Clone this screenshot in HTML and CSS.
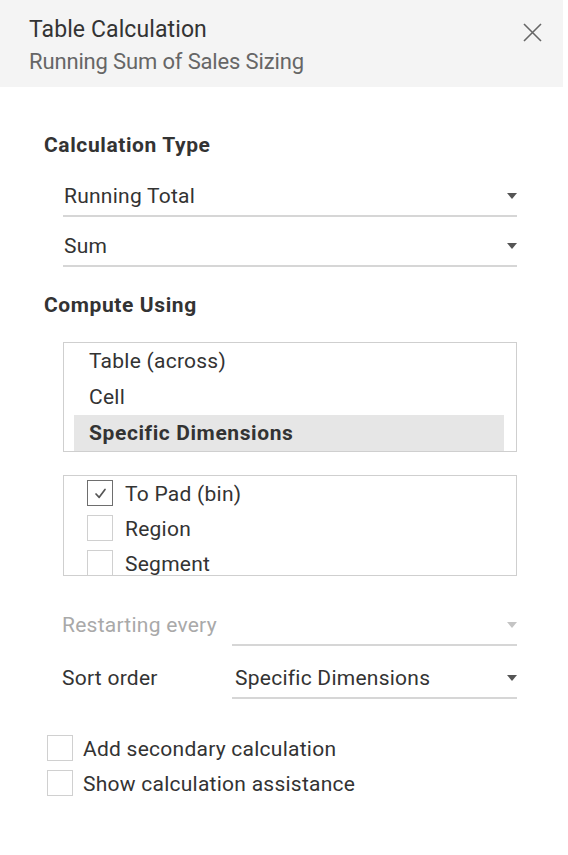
FILE: index.html
```html
<!DOCTYPE html>
<html lang="en">
<head>
<meta charset="utf-8">
<title>Table Calculation</title>
<link rel="stylesheet" href="styles.css">
</head>
<body>
<div class="panel">
  <header class="header">
    <div class="titles">
      <div class="title">Table Calculation</div>
      <div class="subtitle">Running Sum of Sales Sizing</div>
    </div>
    <button class="close" aria-label="Close">
      <svg width="19" height="19" viewBox="0 0 19 19"><path d="M1 1 L18 18 M18 1 L1 18" stroke="#666" stroke-width="1.6" fill="none"/></svg>
    </button>
  </header>

  <main class="content">
    <h2 class="section calc-type">Calculation Type</h2>
    <div class="dropdown dd-first">
      <span class="dd-text">Running Total</span>
      <span class="arrow"></span>
    </div>
    <div class="dropdown dd-second">
      <span class="dd-text">Sum</span>
      <span class="arrow"></span>
    </div>

    <h2 class="section compute">Compute Using</h2>
    <div class="listbox">
      <div class="list-item">Table (across)</div>
      <div class="list-item">Cell</div>
      <div class="list-item selected">Specific Dimensions</div>
    </div>

    <div class="checklist">
      <div class="check-row">
        <span class="checkbox checked">
          <svg width="15" height="13" viewBox="0 0 15 13"><path d="M3 7 L6.2 10.3 L12 2.5" stroke="#555" stroke-width="1.7" fill="none" stroke-linecap="round" stroke-linejoin="round"/></svg>
        </span>
        <span class="check-label">To Pad (bin)</span>
      </div>
      <div class="check-row">
        <span class="checkbox"></span>
        <span class="check-label">Region</span>
      </div>
      <div class="check-row">
        <span class="checkbox"></span>
        <span class="check-label">Segment</span>
      </div>
    </div>

    <div class="field-row restart">
      <span class="field-label disabled">Restarting every</span>
      <div class="dropdown field-dd">
        <span class="dd-text"></span>
        <span class="arrow light"></span>
      </div>
    </div>
    <div class="field-row sort">
      <span class="field-label">Sort order</span>
      <div class="dropdown field-dd">
        <span class="dd-text">Specific Dimensions</span>
        <span class="arrow"></span>
      </div>
    </div>

    <div class="options">
      <div class="check-row opt">
        <span class="checkbox"></span>
        <span class="check-label">Add secondary calculation</span>
      </div>
      <div class="check-row opt">
        <span class="checkbox"></span>
        <span class="check-label">Show calculation assistance</span>
      </div>
    </div>
  </main>
</div>
</body>
</html>
```

FILE: styles.css
```css
* { box-sizing: border-box; }

html, body {
  margin: 0;
  padding: 0;
  background: #ffffff;
}

body {
  font-family: Roboto, "Liberation Sans", Arial, sans-serif;
  color: #333333;
  width: 568px;
  height: 855px;
  overflow: hidden;
  font-size: 21px;
  letter-spacing: 0.25px;
}

.panel {
  width: 563px;
}

.header {
  background: #f4f4f4;
  height: 87px;
  padding: 17px 21px 0 29px;
  display: flex;
  justify-content: space-between;
  align-items: flex-start;
}

.title {
  font-size: 23px;
  line-height: 26px;
  letter-spacing: 0.1px;
  color: #333;
}

.subtitle {
  font-size: 22px;
  line-height: 26px;
  letter-spacing: -0.15px;
  margin-top: 6px;
  color: #666;
}

.close {
  border: 0;
  background: transparent;
  padding: 0;
  margin-top: 6px;
  width: 19px;
  height: 19px;
  display: block;
  cursor: pointer;
}
.close svg { display: block; }

.content {
  padding: 0 46px 0 44px;
}

.section {
  margin: 0;
  font-size: 21px;
  line-height: 24px;
  font-weight: bold;
  letter-spacing: 0.6px;
  color: #333;
}

.calc-type { padding-top: 46px; }
.compute { margin-top: 26px; }

.dropdown {
  display: flex;
  align-items: center;
  justify-content: space-between;
  height: 33px;
  padding-bottom: 7px;
  border-bottom: 2px solid #d6d6d6;
  font-size: 21px;
  line-height: 24px;
  color: #333;
}

.dd-first { margin: 27px 0 0 19px; }
.dd-second { margin: 17px 0 0 19px; }

.dd-text { padding-left: 1px; }

.arrow {
  width: 0;
  height: 0;
  border-left: 5.5px solid transparent;
  border-right: 5.5px solid transparent;
  border-top: 6px solid #555;
}
.arrow.light { border-top-color: #c4c4c4; }

.listbox {
  margin: 25px 0 0 19px;
  border: 1px solid #cfcfcf;
  height: 110px;
  padding: 0 12px 0 10px;
  overflow: hidden;
}

.list-item {
  height: 36px;
  line-height: 36px;
  font-size: 21px;
  padding-left: 15px;
  color: #333;
}

.list-item.selected {
  background: #e6e6e6;
  font-weight: bold;
  letter-spacing: 0.6px;
}

.checklist {
  margin: 23px 0 0 19px;
  border: 1px solid #cfcfcf;
  height: 101px;
  padding: 1px 0 0 23px;
  overflow: hidden;
}

.check-row {
  display: flex;
  align-items: flex-start;
  height: 35px;
  font-size: 21px;
  line-height: 35px;
}

.checkbox {
  flex: none;
  width: 26px;
  height: 26px;
  margin-top: 3px;
  border: 1.5px solid #d0d0d0;
  background: #fff;
  display: flex;
  align-items: center;
  justify-content: center;
}

.checkbox.checked {
  border-color: #6e6e6e;
}
.checkbox svg { display: block; }

.check-label {
  margin-left: 12px;
  color: #333;
}

.field-row {
  display: flex;
  align-items: flex-start;
  margin-left: 18px;
}

.restart { margin-top: 37px; }
.sort { margin-top: 20px; }

.field-label {
  width: 170px;
  flex: none;
  font-size: 21px;
  line-height: 24px;
  color: #333;
}
.field-label.disabled { color: #a9a9a9; }

.field-dd {
  flex: 1;
  margin: 0;
}
.field-dd .dd-text { padding-left: 3px; }

.options {
  margin-top: 33px;
  padding-left: 3px;
}

.opt .check-label { margin-left: 10px; }
```
